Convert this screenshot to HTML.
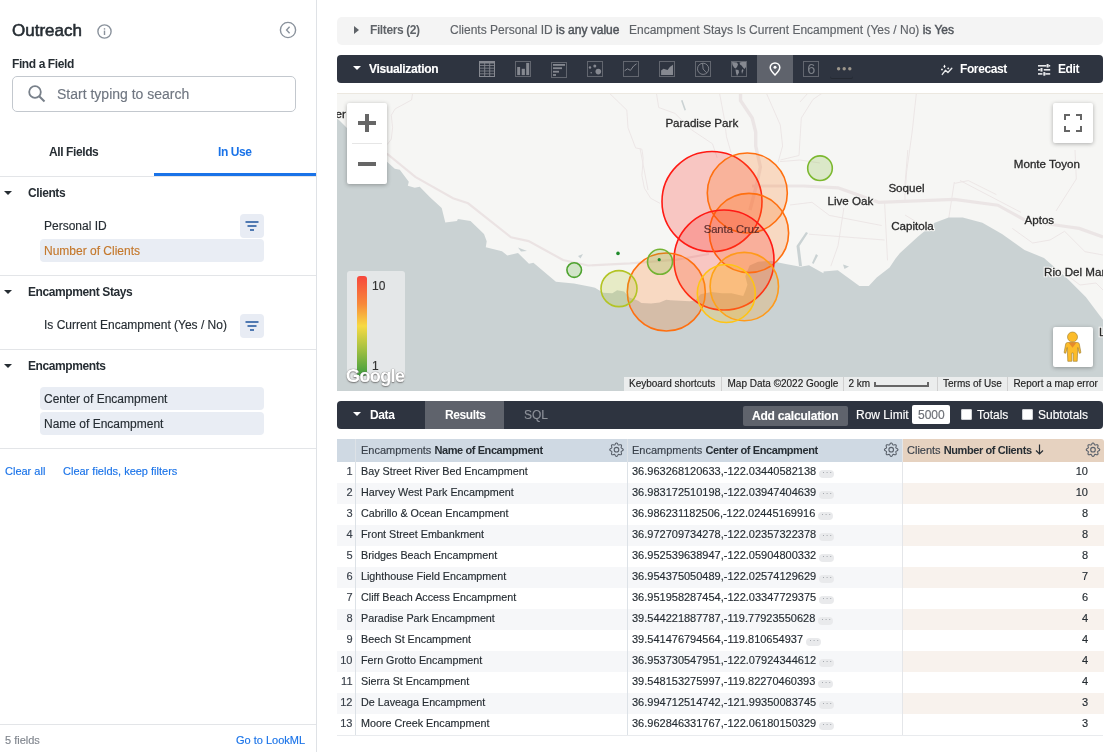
<!DOCTYPE html>
<html><head><meta charset="utf-8">
<style>
*{box-sizing:border-box;margin:0;padding:0}
html,body{width:1112px;height:752px;overflow:hidden;background:#fff;font-family:"Liberation Sans",sans-serif;color:#262d33;-webkit-font-smoothing:antialiased}
.sb,.a{will-change:transform}
.a{-webkit-text-stroke:0.15px currentColor}
.med{font-weight:700;letter-spacing:-0.4px;-webkit-text-stroke:0 !important}
.medi{font-weight:700;letter-spacing:-0.3px;-webkit-text-stroke:0 !important}
.a{position:absolute;white-space:nowrap}
.sb{position:absolute;left:0;top:0;width:317px;height:752px;border-right:1px solid #dfe2e6;background:#fff}
.hr{position:absolute;left:0;width:316px;height:1px;background:#e3e5e8}
.fld{position:absolute;left:40px;width:224px;height:23px;background:#e9edf4;border-radius:4px}
.fbtn{position:absolute;left:240px;width:24px;height:24px;background:#e8ecf4;border-radius:4px}
.fbtn i{position:absolute;height:2px;background:#5079b2;left:50%;transform:translateX(-50%)}
.tri-d{position:absolute;width:0;height:0;border-left:4px solid transparent;border-right:4px solid transparent;border-top:4px solid #262d33}
.bar{position:absolute;left:337px;width:766px;height:28px;background:#2e3440;border-radius:4px}
.vic{position:absolute;top:61px;width:16px;height:16px;border:1px solid #6d717a}
</style></head><body>

<!-- SIDEBAR -->
<div class="sb">
  <div class="a" style="left:12px;top:21px;font-size:17px;line-height:20px;color:#262d33;-webkit-text-stroke:0.55px #262d33" >Outreach</div>
  <svg class="a" style="left:96.7px;top:24.1px" width="15" height="15" viewBox="0 0 15 15"><circle cx="7.5" cy="7.5" r="6.6" fill="none" stroke="#8a929c" stroke-width="1.4"/><rect x="6.8" y="6.6" width="1.4" height="4.4" fill="#8a929c"/><rect x="6.8" y="4.2" width="1.4" height="1.4" fill="#8a929c"/></svg>
  <svg class="a" style="left:278.6px;top:21.2px" width="18" height="18" viewBox="0 0 18 18"><circle cx="9" cy="9" r="7.6" fill="none" stroke="#8a929c" stroke-width="1.4"/><path d="M10.6 5.8 L7.6 9 L10.6 12.2" fill="none" stroke="#8a929c" stroke-width="1.4"/></svg>

  <div class="a med" style="left:12px;top:56.8px;font-size:12px;line-height:14px;color:#262d33">Find a Field</div>
  <div class="a" style="left:12px;top:76px;width:284px;height:36px;border:1px solid #c3c8ce;border-radius:5px"></div>
  <svg class="a" style="left:27px;top:84px" width="20" height="20" viewBox="0 0 20 20"><circle cx="8" cy="8" r="5.8" fill="none" stroke="#78808a" stroke-width="1.8"/><path d="M12.2 12.2 L17.5 17.5" stroke="#78808a" stroke-width="2"/></svg>
  <div class="a" style="left:57px;top:86px;font-size:14px;line-height:16px;color:#6f7680">Start typing to search</div>

  <div class="a med" style="left:49px;top:145px;font-size:12px;line-height:14px;color:#262d33">All Fields</div>
  <div class="a med" style="left:218px;top:145px;font-size:12px;line-height:14px;color:#1a73e8">In Use</div>
  <div class="hr" style="top:175.5px"></div>
  <div class="a" style="left:154px;top:173.3px;width:162px;height:2.7px;background:#1a73e8"></div>

  <!-- Clients -->
  <div class="tri-d" style="left:4px;top:191px"></div>
  <div class="a med" style="left:28px;top:186px;font-size:12px;line-height:14px;color:#262d33">Clients</div>
  <div class="a" style="left:44px;top:219px;font-size:12px;line-height:14px;color:#262d33">Personal ID</div>
  <div class="fbtn" style="top:214px"><i style="top:7px;width:13px"></i><i style="top:11px;width:9px"></i><i style="top:15px;width:4px"></i></div>
  <div class="fld" style="top:239px"></div>
  <div class="a" style="left:44px;top:244px;font-size:12px;line-height:14px;color:#c4782c">Number of Clients</div>
  <div class="hr" style="top:275px"></div>

  <!-- Encampment Stays -->
  <div class="tri-d" style="left:4px;top:290px"></div>
  <div class="a med" style="left:28px;top:285px;font-size:12px;line-height:14px;color:#262d33">Encampment Stays</div>
  <div class="a" style="left:44px;top:318px;font-size:12px;line-height:14px;color:#262d33">Is Current Encampment (Yes / No)</div>
  <div class="fbtn" style="top:313.5px"><i style="top:7px;width:13px"></i><i style="top:11px;width:9px"></i><i style="top:15px;width:4px"></i></div>
  <div class="hr" style="top:349px"></div>

  <!-- Encampments -->
  <div class="tri-d" style="left:4px;top:364px"></div>
  <div class="a med" style="left:28px;top:359px;font-size:12px;line-height:14px;color:#262d33">Encampments</div>
  <div class="fld" style="top:387px"></div>
  <div class="a" style="left:44px;top:392px;font-size:12px;line-height:14px;color:#262d33">Center of Encampment</div>
  <div class="fld" style="top:412px"></div>
  <div class="a" style="left:44px;top:417px;font-size:12px;line-height:14px;color:#262d33">Name of Encampment</div>
  <div class="hr" style="top:448px"></div>

  <div class="a" style="left:5px;top:465px;font-size:11px;line-height:13px;color:#1a73e8">Clear all</div>
  <div class="a" style="left:62.5px;top:465px;font-size:11px;line-height:13px;color:#1a73e8">Clear fields, keep filters</div>

  <div class="hr" style="top:724px"></div>
  <div class="a" style="left:4.5px;top:734px;font-size:11px;line-height:13px;color:#80868e">5 fields</div>
  <div class="a" style="left:236px;top:734px;font-size:11px;line-height:13px;color:#1a73e8">Go to LookML</div>
</div>

<!-- MAIN -->
<div class="a" style="left:337px;top:17px;width:766px;height:28px;background:#f4f4f4;border-radius:5px"></div>
<div class="a" style="left:354px;top:26px;width:0;height:0;border-top:4px solid transparent;border-bottom:4px solid transparent;border-left:5px solid #5f6368"></div>
<div class="a med" style="left:369.5px;top:23.3px;font-size:12px;line-height:14px;color:#5f6368">Filters (2)</div>
<div class="a" style="left:449.5px;top:23.3px;font-size:12px;line-height:14px;color:#5f6368">Clients Personal ID <span style="color:#50555b;-webkit-text-stroke:0.45px #50555b">is any value</span></div>
<div class="a" style="left:629px;top:23.3px;font-size:12px;line-height:14px;color:#5f6368">Encampment Stays Is Current Encampment (Yes / No) <span style="color:#50555b;-webkit-text-stroke:0.45px #50555b">is Yes</span></div>

<!-- viz bar -->
<div class="bar" style="top:55px"></div>
<div class="tri-d" style="left:353px;top:66px;border-top-color:#fff;border-left-width:4px;border-right-width:4px"></div>
<div class="a" style="left:369px;top:62px;font-size:12px;line-height:14px;font-weight:700;letter-spacing:-0.3px;color:#fff">Visualization</div>
<svg class="a" style="left:479px;top:61px" width="16" height="16" viewBox="0 0 16 16"><rect x="0.5" y="0.5" width="15" height="15" fill="none" stroke="#62666f" stroke-width="1"/><rect x="0" y="0" width="16" height="2.5" fill="#868991"/><line x1="0.5" y1="4.5" x2="15.5" y2="4.5" stroke="#868991" stroke-width="0.8"/><line x1="0.5" y1="7.2" x2="15.5" y2="7.2" stroke="#868991" stroke-width="0.8"/><line x1="0.5" y1="10" x2="15.5" y2="10" stroke="#868991" stroke-width="0.8"/><line x1="0.5" y1="12.8" x2="15.5" y2="12.8" stroke="#868991" stroke-width="0.8"/><line x1="5.7" y1="0.5" x2="5.7" y2="15.5" stroke="#868991" stroke-width="0.9"/><line x1="10.7" y1="0.5" x2="10.7" y2="15.5" stroke="#868991" stroke-width="0.9"/><rect x="0.5" y="0.5" width="15" height="15" fill="none" stroke="#868991" stroke-width="1"/></svg><svg class="a" style="left:515px;top:61px" width="16" height="16" viewBox="0 0 16 16"><rect x="0.5" y="0.5" width="15" height="15" fill="none" stroke="#62666f" stroke-width="1"/><rect x="2.2" y="6" width="2.9" height="8.1" fill="#868991"/><rect x="6.7" y="7.8" width="3.2" height="6.3" fill="#868991"/><rect x="11.2" y="1.9" width="3" height="12.2" fill="#868991"/></svg><svg class="a" style="left:551px;top:62px" width="16" height="16" viewBox="0 0 16 16"><rect x="0.5" y="0.5" width="15" height="15" fill="none" stroke="#62666f" stroke-width="1"/><rect x="2" y="2" width="12" height="1.8" fill="#868991"/><rect x="2" y="5.3" width="9" height="1.8" fill="#868991"/><rect x="2" y="8.8" width="6" height="1.8" fill="#868991"/><rect x="2" y="12.1" width="3" height="1.8" fill="#868991"/></svg><svg class="a" style="left:587px;top:61px" width="16" height="16" viewBox="0 0 16 16"><rect x="0.5" y="0.5" width="15" height="15" fill="none" stroke="#62666f" stroke-width="1"/><circle cx="3" cy="6.5" r="1.2" fill="#868991"/><circle cx="7.8" cy="4.9" r="1.5" fill="#868991"/><circle cx="4.2" cy="11.7" r="0.8" fill="#868991"/><circle cx="11.3" cy="10.6" r="2.8" fill="#868991"/></svg><svg class="a" style="left:623px;top:61px" width="16" height="16" viewBox="0 0 16 16"><rect x="0.5" y="0.5" width="15" height="15" fill="none" stroke="#62666f" stroke-width="1"/><path d="M1.6 9.8 L4.5 7.8 L7.4 9.4 L10.7 4.9 L13.6 2.8" fill="none" stroke="#868991" stroke-width="1"/></svg><svg class="a" style="left:659px;top:61px" width="16" height="16" viewBox="0 0 16 16"><rect x="0.5" y="0.5" width="15" height="15" fill="none" stroke="#62666f" stroke-width="1"/><path d="M2.1 14.1 L2.1 9.6 L4.5 7.8 L8.6 9.1 L10.8 6 L14 3.7 L14 14.1 Z" fill="#868991"/></svg><svg class="a" style="left:695px;top:61px" width="16" height="16" viewBox="0 0 16 16"><rect x="0.5" y="0.5" width="15" height="15" fill="none" stroke="#62666f" stroke-width="1"/><circle cx="8.1" cy="7.8" r="5.6" fill="none" stroke="#868991" stroke-width="0.9"/><path d="M7.6 2.2 L8.1 8 L11.6 11.8" fill="none" stroke="#868991" stroke-width="0.9"/></svg><svg class="a" style="left:731px;top:61px" width="16" height="16" viewBox="0 0 16 16"><rect x="0.5" y="0.5" width="15" height="15" fill="none" stroke="#62666f" stroke-width="1"/><path d="M1 1 L6 1.5 L7 3.5 L6 6 L4.5 7.5 L3 6.5 L1.5 4 Z M4.5 8.5 L7.5 9 L8 11.5 L6 15 L5 12 Z M8.5 1.5 L11 1 L15 1 L15 6 L13.5 8 L12 6.5 L10.5 4.5 L9 3.5 Z M11.5 8 L12.5 9 L11 13 L10.5 10 Z" fill="#868991"/></svg><svg class="a" style="left:803px;top:61px" width="16" height="16" viewBox="0 0 16 16"><rect x="0.5" y="0.5" width="15" height="15" fill="none" stroke="#62666f" stroke-width="1"/><text x="8.2" y="13.4" font-size="14.5" text-anchor="middle" fill="#7c8088" font-family="Liberation Sans">6</text></svg><div class="a" style="left:829.5px;top:58px;width:23px;height:20px;border-radius:2px;box-shadow:0 1px 0 #252a33"></div><svg class="a" style="left:835px;top:65px" width="19" height="8" viewBox="0 0 19 8"><circle cx="3.6" cy="3.7" r="1.7" fill="#9d968b"/><circle cx="9.2" cy="3.7" r="1.7" fill="#9d968b"/><circle cx="14.8" cy="3.7" r="1.7" fill="#9d968b"/></svg>
<div class="a" style="left:757px;top:55px;width:36px;height:28px;background:#5f636c"></div>
<svg class="a" style="left:769px;top:62px" width="12" height="14" viewBox="0 0 12 14"><path d="M6 1 C3.3 1 1.2 3 1.2 5.6 C1.2 8.4 6 13 6 13 C6 13 10.8 8.4 10.8 5.6 C10.8 3 8.7 1 6 1 Z" fill="none" stroke="#fff" stroke-width="1.5"/><circle cx="6" cy="5.2" r="1.5" fill="#fff"/></svg>
<svg class="a" style="left:937px;top:62px" width="18" height="16" viewBox="0 0 18 16"><path d="M5.3 12.4 L8.4 8.3 L10.9 10.6 L14.8 6.2" fill="none" stroke="#e8e9eb" stroke-width="1.4" stroke-linecap="round" stroke-linejoin="round"/><path d="M7.5 2.6 L8.6 4.5 L7.5 6.3 L6.4 4.5 Z" fill="#fff"/><path d="M5 6.3 L6.1 7.5 L5 8.7 L3.9 7.5 Z" fill="#eee"/><path d="M11.2 5.2 L12.3 6.4 L11.2 7.6 L10.1 6.4 Z" fill="#eee"/></svg>
<div class="a med" style="left:959.5px;top:62px;font-size:12px;line-height:14px;color:#fff">Forecast</div>
<svg class="a" style="left:1036px;top:62px" width="16" height="16" viewBox="0 0 16 16"><g fill="#e8e9eb"><rect x="2" y="3" width="8.5" height="1.6"/><rect x="12.6" y="3" width="1.6" height="1.6"/><rect x="10.6" y="2" width="2" height="3.6"/><rect x="2" y="7" width="2.4" height="1.6"/><rect x="4.5" y="6" width="2" height="3.6"/><rect x="7.8" y="7" width="6.4" height="1.6"/><rect x="2" y="11.1" width="4.4" height="1.6"/><rect x="7.3" y="10.1" width="2" height="3.6"/><rect x="9.3" y="11.1" width="4.9" height="1.6"/></g></svg>
<div class="a med" style="left:1057.5px;top:62px;font-size:12px;line-height:14px;color:#fff">Edit</div>

<!-- MAP -->
<div id="map" class="a" style="left:337px;top:93px;width:766px;height:298px;overflow:hidden;background:#f5f5f3"><svg width="766" height="298" viewBox="337 93 766 298" style="position:absolute;left:0;top:0"><rect x="337" y="93" width="766" height="298" fill="#f6f6f4"/><polyline points="412.7,93 411.5,100 395.1,108.9 391.3,115.2 392.6,127.8 391.3,139.1 387.6,144.1 380,150" fill="none" stroke="#ebe4e4" stroke-width="0.9"/><polyline points="609.2,93 626.8,110.1 628,127.8 635.6,147.9 641.9,149.2 643.2,158 641.9,175.6 644.4,188.2 650.7,198.3 660,203.3" fill="none" stroke="#ebe4e4" stroke-width="0.9"/><polyline points="656.4,93 658.7,107.5 675,113.4 691.4,129.7 712.5,143.8 717.2,157.8" fill="none" stroke="#ebe4e4" stroke-width="0.9"/><polyline points="719.5,93 724.2,118 726.5,136.8 731.2,153" fill="none" stroke="#ebe4e4" stroke-width="0.9"/><polyline points="766.3,93 780.3,125 782.6,146 778,162.5" fill="none" stroke="#ebe4e4" stroke-width="0.9"/><polyline points="822.4,93 813,99.4 801.3,118 799,155.5 780.3,160" fill="none" stroke="#ebe4e4" stroke-width="0.9"/><polyline points="640,148.5 642.3,160 648,190" fill="none" stroke="#ebe4e4" stroke-width="0.9"/><polyline points="812,202.3 829.4,215.4 881.7,225.5" fill="none" stroke="#ebe4e4" stroke-width="0.9"/><polyline points="809,234.2 884.6,240" fill="none" stroke="#ebe4e4" stroke-width="0.9"/><polyline points="843.9,208 838,245.8 830.8,266.2" fill="none" stroke="#ebe4e4" stroke-width="0.9"/><polyline points="884.6,202.3 887.5,260.4" fill="none" stroke="#ebe4e4" stroke-width="0.9"/><polyline points="907.8,150 904.9,184.9 905,200" fill="none" stroke="#ebe4e4" stroke-width="0.9"/><polyline points="954.3,182 948.5,219.7" fill="none" stroke="#ebe4e4" stroke-width="0.9"/><polyline points="960,180.5 1021,212.4" fill="none" stroke="#ebe4e4" stroke-width="0.9"/><polyline points="1075,150 1076.3,179 1056,211" fill="none" stroke="#ebe4e4" stroke-width="0.9"/><polyline points="1012.3,228.4 1032.7,243 1050,240 1064.6,231.3" fill="none" stroke="#ebe4e4" stroke-width="0.9"/><polyline points="1064.6,231.3 1085,251.7 1103,255" fill="none" stroke="#ebe4e4" stroke-width="0.9"/><polyline points="1060,270 1080,285 1096,283 1103,290" fill="none" stroke="#ebe4e4" stroke-width="0.9"/><polyline points="780,161.6 800,160 820,163" fill="none" stroke="#ebe4e4" stroke-width="0.9"/><polyline points="916.4,93 912,133 906.6,172 905,195" fill="none" stroke="#ebe4e4" stroke-width="0.9"/><polyline points="808,93 800,102" fill="none" stroke="#ebe4e4" stroke-width="0.9"/><polyline points="954.3,183.4 968.4,180.6 996.4,194.6" fill="none" stroke="#ebe4e4" stroke-width="0.9"/><polyline points="790,205 812,202.3" fill="none" stroke="#ebe4e4" stroke-width="0.9"/><polyline points="905,215 930,230 935,245" fill="none" stroke="#ebe4e4" stroke-width="0.9"/><polyline points="337,135 360,145 387.6,154.2 415.3,176.9 453,198.3 468.1,203.3 511,237.3 528.6,241.1 563,260 588,265.5 630,263.4 677,259.7 709,254" fill="none" stroke="#ebe3e3" stroke-width="2.2"/><polyline points="752,186 803.7,186 838,187.8 878.7,202.3 954.3,199.4 997.8,205.2 1026.9,221.2 1058.8,225.5 1079.2,228.4 1103,237" fill="none" stroke="#ebe5e5" stroke-width="3.2"/><polyline points="740.5,93 740.5,100.5 752.2,118 755.7,132 755.7,146 760.4,167 756.9,183.5 750,210" fill="none" stroke="#ebe5e5" stroke-width="3.4"/><polygon points="681,100.5 682.5,100 686,110 684.5,110.5" fill="#cad2d3"/><polygon points="337,118 347,128 387,161.8 394.8,168.8 399.8,169.8 408.8,181.7 407.8,185.7 414.8,187.7 419.7,186.7 430,197.2 441.7,208 445.3,222.4 457,221 457.9,219.1 470.5,221 484,234 486.7,241.3 485.8,247.2 502,251.2 507.3,255.6 518,253 529,263.7 533.4,262.8 555.9,281.7 573.9,283.5 591.9,287.1 595,287.8 603.1,292.7 612.3,293.2 617.1,290.3 624.1,291.6 629.5,297.5 638.2,300.7 641.4,302.9 651.1,303.4 659.7,302.4 666.2,299.7 670.5,300.2 689.9,301.3 695.3,300.2 700.6,294.3 711.3,292.1 721.9,293.2 731.5,293.2 743.2,295.9 745.3,291 747.4,284.7 745.3,276.2 749.6,265.5 758.1,261.8 770.9,260.7 777.2,262.3 785.7,263.9 800.4,266.7 809,265.3 820.6,271.7 823.5,273.2 823.5,271.4 837.8,270.3 859.4,286.1 868.8,286.1 876.7,277.5 889.6,267.4 895.4,258.8 900,253 917.8,236.7 934.7,222.7 948.7,217.6 962.7,217.6 982.4,222.7 1002,233.9 1024.5,250 1044,258 1066.5,277.7 1086,297.3 1103,319.8 1103,391 337,391" fill="#cad2d3"/><polygon points="806,232 808,233 799.5,246 802,266 799,266 796.5,246" fill="#cad2d3"/><polygon points="816,254 818,255.5 813.5,264 812,263" fill="#cad2d3"/><polygon points="843,264.5 849,266.5 844.5,269" fill="#cad2d3"/><polygon points="518,247.5 527,251 521,251.5" fill="#cad2d3"/><polygon points="578,256 583,254 580.5,258.5" fill="#cad2d3"/><text x="665.4" y="127.1" font-family="Liberation Sans" font-size="11.6" fill="#2a2a2a"  stroke="#f6f6f4" stroke-width="2.5">Paradise Park</text><text x="665.4" y="127.1" font-family="Liberation Sans" font-size="11.6" fill="#2a2a2a"  stroke="#2a2a2a" stroke-width="0.3">Paradise Park</text><text x="827.5" y="205.3" font-family="Liberation Sans" font-size="11.6" fill="#2a2a2a"  stroke="#f6f6f4" stroke-width="2.5">Live Oak</text><text x="827.5" y="205.3" font-family="Liberation Sans" font-size="11.6" fill="#2a2a2a"  stroke="#2a2a2a" stroke-width="0.3">Live Oak</text><text x="888.4" y="191.8" font-family="Liberation Sans" font-size="11.6" fill="#2a2a2a"  stroke="#f6f6f4" stroke-width="2.5">Soquel</text><text x="888.4" y="191.8" font-family="Liberation Sans" font-size="11.6" fill="#2a2a2a"  stroke="#2a2a2a" stroke-width="0.3">Soquel</text><text x="891.2" y="229.7" font-family="Liberation Sans" font-size="11.6" fill="#2a2a2a"  stroke="#f6f6f4" stroke-width="2.5">Capitola</text><text x="891.2" y="229.7" font-family="Liberation Sans" font-size="11.6" fill="#2a2a2a"  stroke="#2a2a2a" stroke-width="0.3">Capitola</text><text x="1013.8" y="168" font-family="Liberation Sans" font-size="11.6" fill="#2a2a2a"  stroke="#f6f6f4" stroke-width="2.5">Monte Toyon</text><text x="1013.8" y="168" font-family="Liberation Sans" font-size="11.6" fill="#2a2a2a"  stroke="#2a2a2a" stroke-width="0.3">Monte Toyon</text><text x="1024.5" y="224.1" font-family="Liberation Sans" font-size="11.6" fill="#2a2a2a"  stroke="#f6f6f4" stroke-width="2.5">Aptos</text><text x="1024.5" y="224.1" font-family="Liberation Sans" font-size="11.6" fill="#2a2a2a"  stroke="#2a2a2a" stroke-width="0.3">Aptos</text><text x="1044.1" y="275.5" font-family="Liberation Sans" font-size="11.6" fill="#2a2a2a"  stroke="#f6f6f4" stroke-width="2.5">Rio Del Mar</text><text x="1044.1" y="275.5" font-family="Liberation Sans" font-size="11.6" fill="#2a2a2a"  stroke="#2a2a2a" stroke-width="0.3">Rio Del Mar</text><text x="1099" y="336" font-family="Liberation Sans" font-size="11.6" fill="#2a2a2a"  stroke="#f6f6f4" stroke-width="2.5">L</text><text x="1099" y="336" font-family="Liberation Sans" font-size="11.6" fill="#2a2a2a"  stroke="#2a2a2a" stroke-width="0.3">L</text><text x="335.5" y="117.9" font-family="Liberation Sans" font-size="11.6" fill="#2a2a2a"  stroke="#f6f6f4" stroke-width="2.5">er</text><text x="335.5" y="117.9" font-family="Liberation Sans" font-size="11.6" fill="#2a2a2a"  stroke="#2a2a2a" stroke-width="0.3">er</text><circle cx="712" cy="201.5" r="50" fill="#ff1a14" fill-opacity="0.22" stroke="#ff1a14" stroke-width="1.6"/><circle cx="747.3" cy="193" r="40" fill="#ff7010" fill-opacity="0.22" stroke="#ff7010" stroke-width="1.6"/><circle cx="749" cy="233" r="39.6" fill="#ff7010" fill-opacity="0.22" stroke="#ff7010" stroke-width="1.6"/><circle cx="724" cy="260" r="50" fill="#ff1a14" fill-opacity="0.22" stroke="#ff1a14" stroke-width="1.6"/><circle cx="666.3" cy="292" r="39" fill="#ff7010" fill-opacity="0.22" stroke="#ff7010" stroke-width="1.6"/><circle cx="744.3" cy="286.6" r="34.2" fill="#ff9a1a" fill-opacity="0.22" stroke="#ff9a1a" stroke-width="1.6"/><circle cx="726.3" cy="293.5" r="29" fill="#ffc413" fill-opacity="0.22" stroke="#ffc413" stroke-width="1.6"/><circle cx="619" cy="288.6" r="18" fill="#b3c425" fill-opacity="0.22" stroke="#b3c425" stroke-width="1.6"/><circle cx="660" cy="261.8" r="12.5" fill="#73b332" fill-opacity="0.22" stroke="#73b332" stroke-width="1.6"/><circle cx="820" cy="168.2" r="12.3" fill="#7cb82f" fill-opacity="0.22" stroke="#7cb82f" stroke-width="1.6"/><circle cx="574.2" cy="270.1" r="7.3" fill="#4ea32f" fill-opacity="0.22" stroke="#4ea32f" stroke-width="1.6"/><circle cx="618" cy="253.4" r="1.8" fill="#1f8a2a"/><circle cx="659.2" cy="259.7" r="1.6" fill="#1f8a2a"/><text x="703.7" y="233.1" font-family="Liberation Sans" font-size="11.2" fill="#5e2e2d" stroke="#5e2e2d" stroke-width="0.2">Santa Cruz</text><rect x="337" y="93" width="766" height="1" fill="#ece8e0"/></svg><div style="position:absolute;left:10px;top:10px;width:40px;height:81px;background:#fff;border-radius:2px;box-shadow:0 1px 4px rgba(0,0,0,0.3)"><div style="position:absolute;left:11px;top:18px;width:18px;height:3.6px;background:#666"></div><div style="position:absolute;left:18.2px;top:11px;width:3.6px;height:18px;background:#666"></div><div style="position:absolute;left:5px;top:40px;width:30px;height:1px;background:#e6e6e6"></div><div style="position:absolute;left:11px;top:59px;width:18px;height:3.6px;background:#666"></div></div><div style="position:absolute;left:716px;top:10px;width:40px;height:40px;background:#fff;border-radius:2px;box-shadow:0 1px 4px rgba(0,0,0,0.3)"><svg width="40" height="40" style="position:absolute;left:0;top:0"><path d="M12 17 V12 H17 M23 12 H28 V17 M28 23 V28 H23 M17 28 H12 V23" fill="none" stroke="#666" stroke-width="2"/></svg></div><div style="position:absolute;left:716px;top:234px;width:40px;height:40px;background:#fff;border-radius:2px;box-shadow:0 1px 4px rgba(0,0,0,0.3)"><svg width="40" height="40" style="position:absolute;left:0;top:0"><path d="M14.5 15.5 L24.5 15.5 Q26 15.5 26.3 17 L27.8 25 Q28 26.2 27 26.2 L26.2 26.2 L24.8 20.5 L24.2 34.3 L20.2 34.3 L20.2 26 L18.8 26 L18.8 34.3 L14.8 34.3 L14.2 20.5 L12.8 26.2 L12 26.2 Q11 26.2 11.2 25 L12.7 17 Q13 15.5 14.5 15.5 Z" fill="#fcbc2a" stroke="#9b7a2c" stroke-width="0.6"/><circle cx="19.5" cy="10" r="5" fill="#fcbc2a" stroke="#9b7a2c" stroke-width="0.6"/><path d="M15.5 15.4 L23.5 15.4 L19.5 20.8 Z" fill="#e58a2c"/></svg></div><div style="position:absolute;left:10px;top:178px;width:58px;height:110px;background:rgba(236,238,239,0.75);border-radius:3px"></div><div style="position:absolute;left:20px;top:182.5px;width:10px;height:100px;border-radius:3px;background:linear-gradient(#f7473d,#f7893a 28%,#f7da43 50%,#a8c242 72%,#3c9c3e)"></div><div style="position:absolute;left:35px;top:186px;font-size:12px;line-height:14px;color:#333">10</div><div style="position:absolute;left:35px;top:266px;font-size:12px;line-height:14px;color:#333">1</div><div style="position:absolute;left:9px;top:273px;font-size:18px;line-height:20px;font-weight:700;color:#fff;letter-spacing:-0.6px;text-shadow:0 0 1px #666,0 1px 1.5px #777,0 0 0.5px #444">Google</div><div style="position:absolute;left:287px;top:284px;width:479px;height:14px;background:rgba(245,245,245,0.75)"><div style="position:absolute;font-size:10px;line-height:13px;color:#222;top:0;left:5px;top:0px">Keyboard shortcuts</div><div style="position:absolute;left:97px;top:0;width:1px;height:14px;background:#d0d0d0"></div><div style="position:absolute;font-size:10px;line-height:13px;color:#222;top:0;left:103.5px;top:0px">Map Data ©2022 Google</div><div style="position:absolute;left:219px;top:0;width:1px;height:14px;background:#d0d0d0"></div><div style="position:absolute;font-size:10px;line-height:13px;color:#222;top:0;left:224.5px;top:0px">2 km</div><div style="position:absolute;left:250px;top:5px;width:55px;height:5px;border:2px solid #666;border-top:none"></div><div style="position:absolute;left:313px;top:0;width:1px;height:14px;background:#d0d0d0"></div><div style="position:absolute;font-size:10px;line-height:13px;color:#222;top:0;left:319px;top:0px">Terms of Use</div><div style="position:absolute;left:383px;top:0;width:1px;height:14px;background:#d0d0d0"></div><div style="position:absolute;font-size:10px;line-height:13px;color:#222;top:0;left:389.4px;top:0px">Report a map error</div></div></div>

<!-- data bar -->
<div class="bar" style="top:401px"></div>
<div class="tri-d" style="left:353px;top:412px;border-top-color:#fff"></div>
<div class="a med" style="left:369.5px;top:408px;font-size:12px;line-height:14px;color:#fff">Data</div>
<div class="a" style="left:425px;top:401px;width:79px;height:28px;background:#5f636c"></div>
<div class="a med" style="left:445px;top:408px;font-size:12px;line-height:14px;color:#fff">Results</div>
<div class="a" style="left:524px;top:408px;font-size:12px;line-height:14px;color:#8e929a">SQL</div>
<div class="a" style="left:743px;top:406px;width:105px;height:20px;background:#5f636c;border-radius:2px"></div>
<div class="a" style="left:752px;top:409px;font-size:12px;line-height:14px;font-weight:700;letter-spacing:-0.2px;color:#fff">Add calculation</div>
<div class="a" style="left:856px;top:408px;font-size:12px;line-height:14px;color:#fff">Row Limit</div>
<div class="a" style="left:912px;top:405px;width:38px;height:19px;background:#fff;border-radius:2px"></div>
<div class="a" style="left:917.5px;top:408px;font-size:12px;line-height:14px;color:#6c6f76">5000</div>
<div class="a" style="left:961px;top:409px;width:11px;height:11px;background:#fff;border-radius:2px;box-shadow:inset 0 0 0 1px #d0d2d6"></div>
<div class="a" style="left:976.5px;top:408px;font-size:12px;line-height:14px;color:#fff">Totals</div>
<div class="a" style="left:1022px;top:409px;width:11px;height:11px;background:#fff;border-radius:2px;box-shadow:inset 0 0 0 1px #d0d2d6"></div>
<div class="a" style="left:1037.5px;top:408px;font-size:12px;line-height:14px;color:#fff">Subtotals</div>

<!-- TABLE -->
<div class="a" style="left:337px;top:439px;width:565px;height:22.5px;background:#cfd9e3"></div><div class="a" style="left:902.5px;top:439px;width:200.5px;height:22.5px;background:#e6d2c0;border-top-right-radius:3px"></div><div class="a" style="left:360.5px;top:443.5px;font-size:11px;line-height:13px;color:#39404a">Encampments <span class="med" style="color:#262d33;-webkit-text-stroke-width:0.2px">Name of Encampment</span></div><div class="a" style="left:632px;top:443.5px;font-size:11px;line-height:13px;color:#39404a">Encampments <span class="med" style="color:#262d33;-webkit-text-stroke-width:0.2px">Center of Encampment</span></div><div class="a" style="left:907px;top:443.5px;font-size:11px;line-height:13px;color:#39404a">Clients <span class="med" style="color:#262d33;-webkit-text-stroke-width:0.2px">Number of Clients</span></div><svg class="a" style="left:1035px;top:444px" width="9" height="11" viewBox="0 0 9 11"><path d="M4.5 0.5 V10 M1 6.5 L4.5 10 L8 6.5" fill="none" stroke="#262d33" stroke-width="1.2"/></svg><svg class="a" style="left:0;top:0" width="1112" height="752"><polygon points="616.50,442.95 616.93,443.08 617.33,443.43 617.65,443.91 617.92,444.41 618.16,444.81 618.43,445.03 618.78,445.07 619.24,444.96 619.78,444.79 620.35,444.68 620.88,444.71 621.27,444.93 621.49,445.32 621.52,445.85 621.41,446.42 621.24,446.96 621.13,447.42 621.17,447.77 621.39,448.04 621.79,448.28 622.29,448.55 622.77,448.87 623.12,449.27 623.25,449.70 623.12,450.13 622.77,450.53 622.29,450.85 621.79,451.12 621.39,451.36 621.17,451.63 621.13,451.98 621.24,452.44 621.41,452.98 621.52,453.55 621.49,454.08 621.27,454.47 620.88,454.69 620.35,454.72 619.78,454.61 619.24,454.44 618.78,454.33 618.43,454.37 618.16,454.59 617.92,454.99 617.65,455.49 617.33,455.97 616.93,456.32 616.50,456.45 616.07,456.32 615.67,455.97 615.35,455.49 615.08,454.99 614.84,454.59 614.57,454.37 614.22,454.33 613.76,454.44 613.22,454.61 612.65,454.72 612.12,454.69 611.73,454.47 611.51,454.08 611.48,453.55 611.59,452.98 611.76,452.44 611.87,451.98 611.83,451.63 611.61,451.36 611.21,451.12 610.71,450.85 610.23,450.53 609.88,450.13 609.75,449.70 609.88,449.27 610.23,448.87 610.71,448.55 611.21,448.28 611.61,448.04 611.83,447.77 611.87,447.42 611.76,446.96 611.59,446.42 611.48,445.85 611.51,445.32 611.73,444.93 612.12,444.71 612.65,444.68 613.22,444.79 613.76,444.96 614.22,445.07 614.57,445.03 614.84,444.81 615.08,444.41 615.35,443.91 615.67,443.43 616.07,443.08" fill="none" stroke="#5a616b" stroke-width="1.1" stroke-linejoin="round"/><circle cx="616.5" cy="449.7" r="2.3" fill="none" stroke="#5a616b" stroke-width="1.1"/><polygon points="891.20,442.95 891.63,443.08 892.03,443.43 892.35,443.91 892.62,444.41 892.86,444.81 893.13,445.03 893.48,445.07 893.94,444.96 894.48,444.79 895.05,444.68 895.58,444.71 895.97,444.93 896.19,445.32 896.22,445.85 896.11,446.42 895.94,446.96 895.83,447.42 895.87,447.77 896.09,448.04 896.49,448.28 896.99,448.55 897.47,448.87 897.82,449.27 897.95,449.70 897.82,450.13 897.47,450.53 896.99,450.85 896.49,451.12 896.09,451.36 895.87,451.63 895.83,451.98 895.94,452.44 896.11,452.98 896.22,453.55 896.19,454.08 895.97,454.47 895.58,454.69 895.05,454.72 894.48,454.61 893.94,454.44 893.48,454.33 893.13,454.37 892.86,454.59 892.62,454.99 892.35,455.49 892.03,455.97 891.63,456.32 891.20,456.45 890.77,456.32 890.37,455.97 890.05,455.49 889.78,454.99 889.54,454.59 889.27,454.37 888.92,454.33 888.46,454.44 887.92,454.61 887.35,454.72 886.82,454.69 886.43,454.47 886.21,454.08 886.18,453.55 886.29,452.98 886.46,452.44 886.57,451.98 886.53,451.63 886.31,451.36 885.91,451.12 885.41,450.85 884.93,450.53 884.58,450.13 884.45,449.70 884.58,449.27 884.93,448.87 885.41,448.55 885.91,448.28 886.31,448.04 886.53,447.77 886.57,447.42 886.46,446.96 886.29,446.42 886.18,445.85 886.21,445.32 886.43,444.93 886.82,444.71 887.35,444.68 887.92,444.79 888.46,444.96 888.92,445.07 889.27,445.03 889.54,444.81 889.78,444.41 890.05,443.91 890.37,443.43 890.77,443.08" fill="none" stroke="#5a616b" stroke-width="1.1" stroke-linejoin="round"/><circle cx="891.2" cy="449.7" r="2.3" fill="none" stroke="#5a616b" stroke-width="1.1"/><polygon points="1093.00,442.95 1093.43,443.08 1093.83,443.43 1094.15,443.91 1094.42,444.41 1094.66,444.81 1094.93,445.03 1095.28,445.07 1095.74,444.96 1096.28,444.79 1096.85,444.68 1097.38,444.71 1097.77,444.93 1097.99,445.32 1098.02,445.85 1097.91,446.42 1097.74,446.96 1097.63,447.42 1097.67,447.77 1097.89,448.04 1098.29,448.28 1098.79,448.55 1099.27,448.87 1099.62,449.27 1099.75,449.70 1099.62,450.13 1099.27,450.53 1098.79,450.85 1098.29,451.12 1097.89,451.36 1097.67,451.63 1097.63,451.98 1097.74,452.44 1097.91,452.98 1098.02,453.55 1097.99,454.08 1097.77,454.47 1097.38,454.69 1096.85,454.72 1096.28,454.61 1095.74,454.44 1095.28,454.33 1094.93,454.37 1094.66,454.59 1094.42,454.99 1094.15,455.49 1093.83,455.97 1093.43,456.32 1093.00,456.45 1092.57,456.32 1092.17,455.97 1091.85,455.49 1091.58,454.99 1091.34,454.59 1091.07,454.37 1090.72,454.33 1090.26,454.44 1089.72,454.61 1089.15,454.72 1088.62,454.69 1088.23,454.47 1088.01,454.08 1087.98,453.55 1088.09,452.98 1088.26,452.44 1088.37,451.98 1088.33,451.63 1088.11,451.36 1087.71,451.12 1087.21,450.85 1086.73,450.53 1086.38,450.13 1086.25,449.70 1086.38,449.27 1086.73,448.87 1087.21,448.55 1087.71,448.28 1088.11,448.04 1088.33,447.77 1088.37,447.42 1088.26,446.96 1088.09,446.42 1087.98,445.85 1088.01,445.32 1088.23,444.93 1088.62,444.71 1089.15,444.68 1089.72,444.79 1090.26,444.96 1090.72,445.07 1091.07,445.03 1091.34,444.81 1091.58,444.41 1091.85,443.91 1092.17,443.43 1092.57,443.08" fill="none" stroke="#5a616b" stroke-width="1.1" stroke-linejoin="round"/><circle cx="1093" cy="449.7" r="2.3" fill="none" stroke="#5a616b" stroke-width="1.1"/></svg><div class="a" style="left:337px;top:464.5px;width:15.5px;text-align:right;font-size:11px;line-height:13px;color:#39404a">1</div><div class="a" style="left:360.5px;top:464.5px;font-size:10.75px;line-height:13px;color:#262d33">Bay Street River Bed Encampment</div><div class="a" style="left:632px;top:464.5px;font-size:11px;line-height:13px;color:#262d33">36.963268120633,-122.03440582138<span style="display:inline-block;vertical-align:middle;margin-left:2.5px;width:15px;height:8px;border-radius:4px;background:#e9eaec;position:relative;top:1.5px;font-size:0"><i style="position:absolute;left:4px;top:2px;width:1.3px;height:1.3px;background:#a5a9af;box-shadow:3.6px 0 #a5a9af,7.2px 0 #a5a9af"></i></span></div><div class="a" style="left:1000px;top:464.5px;width:88px;text-align:right;font-size:11px;line-height:13px;color:#262d33">10</div><div class="a" style="left:337px;top:482.5px;width:565px;height:21px;background:#f6f7f9"></div><div class="a" style="left:902.5px;top:482.5px;width:200.5px;height:21px;background:#f8f2ed"></div><div class="a" style="left:337px;top:485.5px;width:15.5px;text-align:right;font-size:11px;line-height:13px;color:#39404a">2</div><div class="a" style="left:360.5px;top:485.5px;font-size:10.75px;line-height:13px;color:#262d33">Harvey West Park Encampment</div><div class="a" style="left:632px;top:485.5px;font-size:11px;line-height:13px;color:#262d33">36.983172510198,-122.03947404639<span style="display:inline-block;vertical-align:middle;margin-left:2.5px;width:15px;height:8px;border-radius:4px;background:#e9eaec;position:relative;top:1.5px;font-size:0"><i style="position:absolute;left:4px;top:2px;width:1.3px;height:1.3px;background:#a5a9af;box-shadow:3.6px 0 #a5a9af,7.2px 0 #a5a9af"></i></span></div><div class="a" style="left:1000px;top:485.5px;width:88px;text-align:right;font-size:11px;line-height:13px;color:#262d33">10</div><div class="a" style="left:337px;top:506.5px;width:15.5px;text-align:right;font-size:11px;line-height:13px;color:#39404a">3</div><div class="a" style="left:360.5px;top:506.5px;font-size:10.75px;line-height:13px;color:#262d33">Cabrillo &amp; Ocean Encampment</div><div class="a" style="left:632px;top:506.5px;font-size:11px;line-height:13px;color:#262d33">36.986231182506,-122.02445169916<span style="display:inline-block;vertical-align:middle;margin-left:2.5px;width:15px;height:8px;border-radius:4px;background:#e9eaec;position:relative;top:1.5px;font-size:0"><i style="position:absolute;left:4px;top:2px;width:1.3px;height:1.3px;background:#a5a9af;box-shadow:3.6px 0 #a5a9af,7.2px 0 #a5a9af"></i></span></div><div class="a" style="left:1000px;top:506.5px;width:88px;text-align:right;font-size:11px;line-height:13px;color:#262d33">8</div><div class="a" style="left:337px;top:524.5px;width:565px;height:21px;background:#f6f7f9"></div><div class="a" style="left:902.5px;top:524.5px;width:200.5px;height:21px;background:#f8f2ed"></div><div class="a" style="left:337px;top:527.5px;width:15.5px;text-align:right;font-size:11px;line-height:13px;color:#39404a">4</div><div class="a" style="left:360.5px;top:527.5px;font-size:10.75px;line-height:13px;color:#262d33">Front Street Embankment</div><div class="a" style="left:632px;top:527.5px;font-size:11px;line-height:13px;color:#262d33">36.972709734278,-122.02357322378<span style="display:inline-block;vertical-align:middle;margin-left:2.5px;width:15px;height:8px;border-radius:4px;background:#e9eaec;position:relative;top:1.5px;font-size:0"><i style="position:absolute;left:4px;top:2px;width:1.3px;height:1.3px;background:#a5a9af;box-shadow:3.6px 0 #a5a9af,7.2px 0 #a5a9af"></i></span></div><div class="a" style="left:1000px;top:527.5px;width:88px;text-align:right;font-size:11px;line-height:13px;color:#262d33">8</div><div class="a" style="left:337px;top:548.5px;width:15.5px;text-align:right;font-size:11px;line-height:13px;color:#39404a">5</div><div class="a" style="left:360.5px;top:548.5px;font-size:10.75px;line-height:13px;color:#262d33">Bridges Beach Encampment</div><div class="a" style="left:632px;top:548.5px;font-size:11px;line-height:13px;color:#262d33">36.952539638947,-122.05904800332<span style="display:inline-block;vertical-align:middle;margin-left:2.5px;width:15px;height:8px;border-radius:4px;background:#e9eaec;position:relative;top:1.5px;font-size:0"><i style="position:absolute;left:4px;top:2px;width:1.3px;height:1.3px;background:#a5a9af;box-shadow:3.6px 0 #a5a9af,7.2px 0 #a5a9af"></i></span></div><div class="a" style="left:1000px;top:548.5px;width:88px;text-align:right;font-size:11px;line-height:13px;color:#262d33">8</div><div class="a" style="left:337px;top:566.5px;width:565px;height:21px;background:#f6f7f9"></div><div class="a" style="left:902.5px;top:566.5px;width:200.5px;height:21px;background:#f8f2ed"></div><div class="a" style="left:337px;top:569.5px;width:15.5px;text-align:right;font-size:11px;line-height:13px;color:#39404a">6</div><div class="a" style="left:360.5px;top:569.5px;font-size:10.75px;line-height:13px;color:#262d33">Lighthouse Field Encampment</div><div class="a" style="left:632px;top:569.5px;font-size:11px;line-height:13px;color:#262d33">36.954375050489,-122.02574129629<span style="display:inline-block;vertical-align:middle;margin-left:2.5px;width:15px;height:8px;border-radius:4px;background:#e9eaec;position:relative;top:1.5px;font-size:0"><i style="position:absolute;left:4px;top:2px;width:1.3px;height:1.3px;background:#a5a9af;box-shadow:3.6px 0 #a5a9af,7.2px 0 #a5a9af"></i></span></div><div class="a" style="left:1000px;top:569.5px;width:88px;text-align:right;font-size:11px;line-height:13px;color:#262d33">7</div><div class="a" style="left:337px;top:590.5px;width:15.5px;text-align:right;font-size:11px;line-height:13px;color:#39404a">7</div><div class="a" style="left:360.5px;top:590.5px;font-size:10.75px;line-height:13px;color:#262d33">Cliff Beach Access Encampment</div><div class="a" style="left:632px;top:590.5px;font-size:11px;line-height:13px;color:#262d33">36.951958287454,-122.03347729375<span style="display:inline-block;vertical-align:middle;margin-left:2.5px;width:15px;height:8px;border-radius:4px;background:#e9eaec;position:relative;top:1.5px;font-size:0"><i style="position:absolute;left:4px;top:2px;width:1.3px;height:1.3px;background:#a5a9af;box-shadow:3.6px 0 #a5a9af,7.2px 0 #a5a9af"></i></span></div><div class="a" style="left:1000px;top:590.5px;width:88px;text-align:right;font-size:11px;line-height:13px;color:#262d33">6</div><div class="a" style="left:337px;top:608.5px;width:565px;height:21px;background:#f6f7f9"></div><div class="a" style="left:902.5px;top:608.5px;width:200.5px;height:21px;background:#f8f2ed"></div><div class="a" style="left:337px;top:611.5px;width:15.5px;text-align:right;font-size:11px;line-height:13px;color:#39404a">8</div><div class="a" style="left:360.5px;top:611.5px;font-size:10.75px;line-height:13px;color:#262d33">Paradise Park Encampment</div><div class="a" style="left:632px;top:611.5px;font-size:11px;line-height:13px;color:#262d33">39.544221887787,-119.77923550628<span style="display:inline-block;vertical-align:middle;margin-left:2.5px;width:15px;height:8px;border-radius:4px;background:#e9eaec;position:relative;top:1.5px;font-size:0"><i style="position:absolute;left:4px;top:2px;width:1.3px;height:1.3px;background:#a5a9af;box-shadow:3.6px 0 #a5a9af,7.2px 0 #a5a9af"></i></span></div><div class="a" style="left:1000px;top:611.5px;width:88px;text-align:right;font-size:11px;line-height:13px;color:#262d33">4</div><div class="a" style="left:337px;top:632.5px;width:15.5px;text-align:right;font-size:11px;line-height:13px;color:#39404a">9</div><div class="a" style="left:360.5px;top:632.5px;font-size:10.75px;line-height:13px;color:#262d33">Beech St Encampment</div><div class="a" style="left:632px;top:632.5px;font-size:11px;line-height:13px;color:#262d33">39.541476794564,-119.810654937<span style="display:inline-block;vertical-align:middle;margin-left:2.5px;width:15px;height:8px;border-radius:4px;background:#e9eaec;position:relative;top:1.5px;font-size:0"><i style="position:absolute;left:4px;top:2px;width:1.3px;height:1.3px;background:#a5a9af;box-shadow:3.6px 0 #a5a9af,7.2px 0 #a5a9af"></i></span></div><div class="a" style="left:1000px;top:632.5px;width:88px;text-align:right;font-size:11px;line-height:13px;color:#262d33">4</div><div class="a" style="left:337px;top:650.5px;width:565px;height:21px;background:#f6f7f9"></div><div class="a" style="left:902.5px;top:650.5px;width:200.5px;height:21px;background:#f8f2ed"></div><div class="a" style="left:337px;top:653.5px;width:15.5px;text-align:right;font-size:11px;line-height:13px;color:#39404a">10</div><div class="a" style="left:360.5px;top:653.5px;font-size:10.75px;line-height:13px;color:#262d33">Fern Grotto Encampment</div><div class="a" style="left:632px;top:653.5px;font-size:11px;line-height:13px;color:#262d33">36.953730547951,-122.07924344612<span style="display:inline-block;vertical-align:middle;margin-left:2.5px;width:15px;height:8px;border-radius:4px;background:#e9eaec;position:relative;top:1.5px;font-size:0"><i style="position:absolute;left:4px;top:2px;width:1.3px;height:1.3px;background:#a5a9af;box-shadow:3.6px 0 #a5a9af,7.2px 0 #a5a9af"></i></span></div><div class="a" style="left:1000px;top:653.5px;width:88px;text-align:right;font-size:11px;line-height:13px;color:#262d33">4</div><div class="a" style="left:337px;top:674.5px;width:15.5px;text-align:right;font-size:11px;line-height:13px;color:#39404a">11</div><div class="a" style="left:360.5px;top:674.5px;font-size:10.75px;line-height:13px;color:#262d33">Sierra St Encampment</div><div class="a" style="left:632px;top:674.5px;font-size:11px;line-height:13px;color:#262d33">39.548153275997,-119.82270460393<span style="display:inline-block;vertical-align:middle;margin-left:2.5px;width:15px;height:8px;border-radius:4px;background:#e9eaec;position:relative;top:1.5px;font-size:0"><i style="position:absolute;left:4px;top:2px;width:1.3px;height:1.3px;background:#a5a9af;box-shadow:3.6px 0 #a5a9af,7.2px 0 #a5a9af"></i></span></div><div class="a" style="left:1000px;top:674.5px;width:88px;text-align:right;font-size:11px;line-height:13px;color:#262d33">4</div><div class="a" style="left:337px;top:692.5px;width:565px;height:21px;background:#f6f7f9"></div><div class="a" style="left:902.5px;top:692.5px;width:200.5px;height:21px;background:#f8f2ed"></div><div class="a" style="left:337px;top:695.5px;width:15.5px;text-align:right;font-size:11px;line-height:13px;color:#39404a">12</div><div class="a" style="left:360.5px;top:695.5px;font-size:10.75px;line-height:13px;color:#262d33">De Laveaga Encampment</div><div class="a" style="left:632px;top:695.5px;font-size:11px;line-height:13px;color:#262d33">36.994712514742,-121.99350083745<span style="display:inline-block;vertical-align:middle;margin-left:2.5px;width:15px;height:8px;border-radius:4px;background:#e9eaec;position:relative;top:1.5px;font-size:0"><i style="position:absolute;left:4px;top:2px;width:1.3px;height:1.3px;background:#a5a9af;box-shadow:3.6px 0 #a5a9af,7.2px 0 #a5a9af"></i></span></div><div class="a" style="left:1000px;top:695.5px;width:88px;text-align:right;font-size:11px;line-height:13px;color:#262d33">3</div><div class="a" style="left:337px;top:716.5px;width:15.5px;text-align:right;font-size:11px;line-height:13px;color:#39404a">13</div><div class="a" style="left:360.5px;top:716.5px;font-size:10.75px;line-height:13px;color:#262d33">Moore Creek Encampment</div><div class="a" style="left:632px;top:716.5px;font-size:11px;line-height:13px;color:#262d33">36.962846331767,-122.06180150329<span style="display:inline-block;vertical-align:middle;margin-left:2.5px;width:15px;height:8px;border-radius:4px;background:#e9eaec;position:relative;top:1.5px;font-size:0"><i style="position:absolute;left:4px;top:2px;width:1.3px;height:1.3px;background:#a5a9af;box-shadow:3.6px 0 #a5a9af,7.2px 0 #a5a9af"></i></span></div><div class="a" style="left:1000px;top:716.5px;width:88px;text-align:right;font-size:11px;line-height:13px;color:#262d33">3</div><div class="a" style="left:355px;top:439px;width:1px;height:296px;background:#dde2e7"></div><div class="a" style="left:627px;top:439px;width:1px;height:296px;background:#dde2e7"></div><div class="a" style="left:902px;top:439px;width:1px;height:296px;background:#e4e6e9"></div><div class="a" style="left:337px;top:734.5px;width:766px;height:1px;background:#e9ebee"></div>

</body></html>
